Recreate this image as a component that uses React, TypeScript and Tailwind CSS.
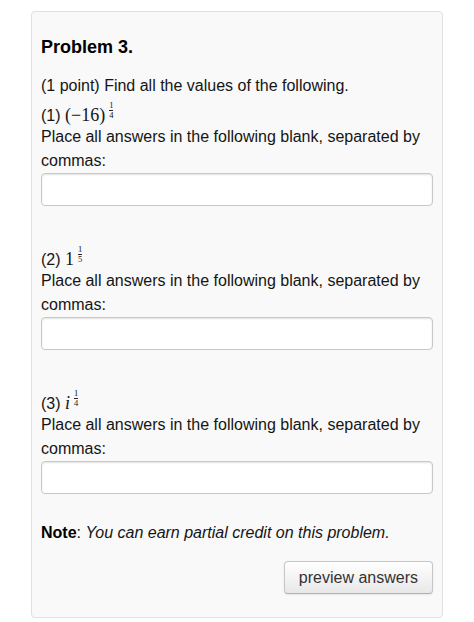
import React from "react";

function Frac({ n, d }: { n: string; d: string }) {
  return (
    <span className="inline-block overflow-hidden align-[2px] ml-[3px] px-[1px]" style={{ fontFamily: '"Liberation Serif", serif' }}>
      <span className="block h-[9px] text-[8.5px] leading-[9px] text-center">{n}</span>
      <span className="block h-px bg-[#222]"></span>
      <span className="block h-[8px] text-[8.5px] leading-[8px] text-center">{d}</span>
    </span>
  );
}

function Section({ label, math }: { label: string; math: React.ReactNode }) {
  return (
    <div>
      <div className="h-[27px] pt-[3px] leading-6 whitespace-nowrap">
        {label} {math}
      </div>
      <p className="leading-6">Place all answers in the following blank, separated by commas:</p>
      <div className="h-[33px] w-full rounded-[4px] border border-[#c8c8c8] bg-white shadow-[inset_0_1px_2px_rgba(0,0,0,0.12)]"></div>
    </div>
  );
}

export default function App() {
  return (
    <div className="min-h-[622px] bg-white pt-[11px] pl-[31px]" style={{ fontFamily: '"Liberation Sans", Arial, sans-serif' }}>
      <div className="w-[412px] rounded-[4px] border border-[#e0e0e0] bg-[#f9f9f9] px-[9px] pt-[23px] pb-[23px] text-[16px] text-[#151515]">
        <h1 className="text-[18px] font-bold leading-6 text-black">Problem 3.</h1>
        <p className="mt-[15px] leading-6">(1 point) Find all the values of the following.</p>
        <Section
          label="(1)"
          math={
            <span>
              <span className="text-[18px]" style={{ fontFamily: '"Liberation Serif", serif' }}>(−16)</span>
              <Frac n="1" d="4" />
            </span>
          }
        />
        <div className="mt-[36px]">
          <Section
            label="(2)"
            math={
              <span>
                <span className="text-[18px]" style={{ fontFamily: '"Liberation Serif", serif' }}>1</span>
                <Frac n="1" d="5" />
              </span>
            }
          />
        </div>
        <div className="mt-[36px]">
          <Section
            label="(3)"
            math={
              <span>
                <span className="text-[18px] italic" style={{ fontFamily: '"Liberation Serif", serif' }}>i</span>
                <Frac n="1" d="4" />
              </span>
            }
          />
        </div>
        <p className="mt-[27px] leading-6">
          <span className="font-bold text-black">Note</span>: <em>You can earn partial credit on this problem.</em>
        </p>
        <div className="mt-[16px] flex justify-end">
          <button className="h-[33px] rounded-[4px] border border-[#c6c6c6] border-b-[#b0b0b0] bg-linear-to-b from-white to-[#e8e8e8] px-[14px] text-[16px] text-[#333] shadow-[0_1px_2px_rgba(0,0,0,0.08)]">
            preview answers
          </button>
        </div>
      </div>
    </div>
  );
}
